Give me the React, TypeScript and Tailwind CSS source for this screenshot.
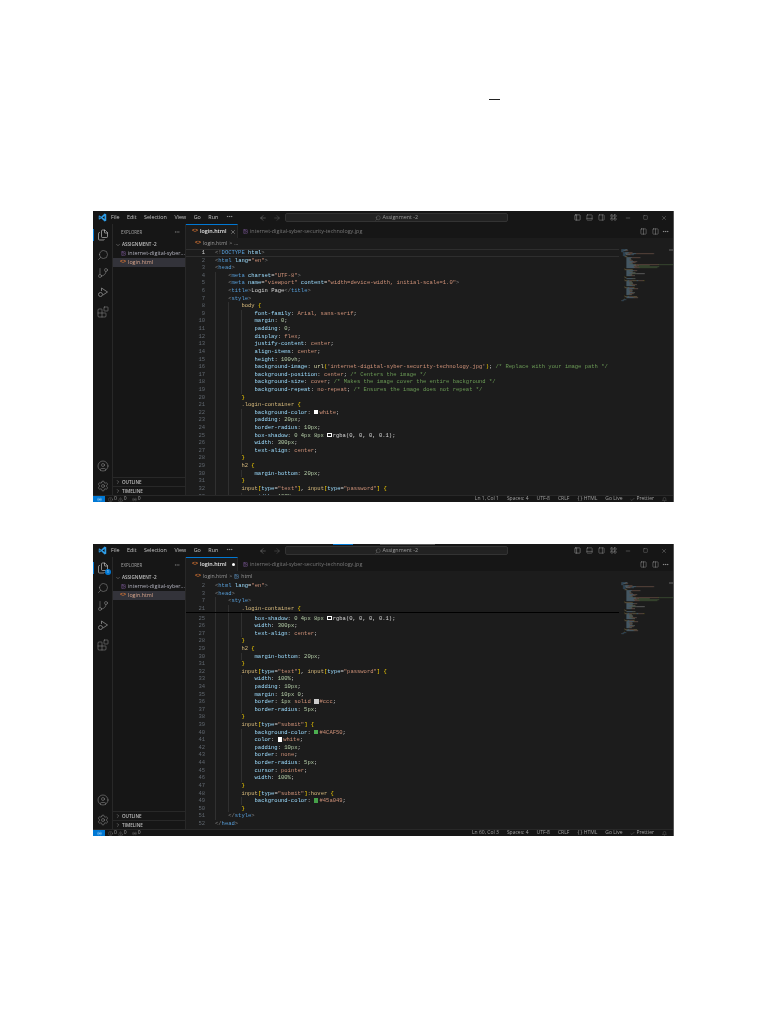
import {
  ArrowLeft,
  ArrowRight,
  Bell,
  Blocks,
  Check,
  ChevronDown,
  ChevronRight,
  CircleAlert,
  CircleUser,
  Columns2,
  Ellipsis,
  Files,
  GitBranch,
  Image,
  LayoutGrid,
  Minus,
  PanelBottom,
  PanelLeft,
  PanelRight,
  Radio,
  Search,
  Settings,
  Square,
  TriangleAlert,
  X,
} from "lucide-react";

type Kind = "punct" | "tag" | "attr" | "str" | "sel" | "prop" | "val" | "num" | "com" | "brace" | "text" | "fn";
type Tok = { k: Kind; t: string; swatch?: string };
type Line = { n: number; indent: number; toks: Tok[] };

const KIND: Record<Kind, { cls: string; hex: string }> = {
  punct: { cls: "text-[#808080]", hex: "#808080" },
  tag: { cls: "text-[#569cd6]", hex: "#569cd6" },
  attr: { cls: "text-[#9cdcfe]", hex: "#9cdcfe" },
  str: { cls: "text-[#ce9178]", hex: "#ce9178" },
  sel: { cls: "text-[#d7ba7d]", hex: "#d7ba7d" },
  prop: { cls: "text-[#9cdcfe]", hex: "#9cdcfe" },
  val: { cls: "text-[#ce9178]", hex: "#ce9178" },
  num: { cls: "text-[#b5cea8]", hex: "#b5cea8" },
  com: { cls: "text-[#6a9955]", hex: "#6a9955" },
  brace: { cls: "text-[#ffd700]", hex: "#ffd700" },
  text: { cls: "text-[#d4d4d4]", hex: "#d4d4d4" },
  fn: { cls: "text-[#dcdcaa]", hex: "#dcdcaa" },
};

function d(prop: string, val: string, comment?: string, swatch?: string): Tok[] {
  const toks: Tok[] = [
    { k: "prop", t: prop },
    { k: "text", t: ": " },
    { k: /^\d/.test(val) ? "num" : "val", t: val, swatch },
    { k: "text", t: ";" },
  ];
  if (comment) toks.push({ k: "com", t: " " + comment });
  return toks;
}

const open = (name: string): Tok[] => [
  { k: "punct", t: "<" },
  { k: "tag", t: name },
  { k: "punct", t: ">" },
];
const close = (name: string): Tok[] => [
  { k: "punct", t: "</" },
  { k: "tag", t: name },
  { k: "punct", t: ">" },
];
const sel = (t: string): Tok[] => [
  { k: "sel", t },
  { k: "text", t: " " },
  { k: "brace", t: "{" },
];
const end: Tok[] = [{ k: "brace", t: "}" }];
const inputSel = (type: string): Tok[] => [
  { k: "sel", t: "input" },
  { k: "brace", t: "[" },
  { k: "attr", t: "type" },
  { k: "text", t: "=" },
  { k: "str", t: `"${type}"` },
  { k: "brace", t: "]" },
];

const RAW: [number, Tok[]][] = [
  [0, [{ k: "punct", t: "<!" }, { k: "tag", t: "DOCTYPE" }, { k: "text", t: " " }, { k: "attr", t: "html" }, { k: "punct", t: ">" }]],
  [0, [{ k: "punct", t: "<" }, { k: "tag", t: "html" }, { k: "text", t: " " }, { k: "attr", t: "lang" }, { k: "text", t: "=" }, { k: "str", t: '"en"' }, { k: "punct", t: ">" }]],
  [0, open("head")],
  [1, [{ k: "punct", t: "<" }, { k: "tag", t: "meta" }, { k: "text", t: " " }, { k: "attr", t: "charset" }, { k: "text", t: "=" }, { k: "str", t: '"UTF-8"' }, { k: "punct", t: ">" }]],
  [1, [{ k: "punct", t: "<" }, { k: "tag", t: "meta" }, { k: "text", t: " " }, { k: "attr", t: "name" }, { k: "text", t: "=" }, { k: "str", t: '"viewport"' }, { k: "text", t: " " }, { k: "attr", t: "content" }, { k: "text", t: "=" }, { k: "str", t: '"width=device-width, initial-scale=1.0"' }, { k: "punct", t: ">" }]],
  [1, [...open("title"), { k: "text", t: "Login Page" }, ...close("title")]],
  [1, open("style")],
  [2, sel("body")],
  [3, d("font-family", "Arial, sans-serif")],
  [3, d("margin", "0")],
  [3, d("padding", "0")],
  [3, d("display", "flex")],
  [3, d("justify-content", "center")],
  [3, d("align-items", "center")],
  [3, d("height", "100vh")],
  [3, [{ k: "prop", t: "background-image" }, { k: "text", t: ": " }, { k: "fn", t: "url" }, { k: "brace", t: "(" }, { k: "str", t: "'internet-digital-syber-security-technology.jpg'" }, { k: "brace", t: ")" }, { k: "text", t: ";" }, { k: "com", t: " /* Replace with your image path */" }]],
  [3, d("background-position", "center", "/* Centers the image */")],
  [3, d("background-size", "cover", "/* Makes the image cover the entire background */")],
  [3, d("background-repeat", "no-repeat", "/* Ensures the image does not repeat */")],
  [2, end],
  [2, sel(".login-container")],
  [3, d("background-color", "white", undefined, "bg-white")],
  [3, d("padding", "20px")],
  [3, d("border-radius", "10px")],
  [3, [{ k: "prop", t: "box-shadow" }, { k: "text", t: ": " }, { k: "num", t: "0 4px 8px " }, { k: "text", t: "rgba(0, 0, 0, 0.1)", swatch: "border-[0.5px] border-white" }, { k: "text", t: ";" }]],
  [3, d("width", "300px")],
  [3, d("text-align", "center")],
  [2, end],
  [2, sel("h2")],
  [3, d("margin-bottom", "20px")],
  [2, end],
  [2, [...inputSel("text"), { k: "text", t: ", " }, ...inputSel("password"), { k: "text", t: " " }, { k: "brace", t: "{" }]],
  [3, d("width", "100%")],
  [3, d("padding", "10px")],
  [3, d("margin", "10px 0")],
  [3, [{ k: "prop", t: "border" }, { k: "text", t: ": " }, { k: "num", t: "1px " }, { k: "val", t: "solid " }, { k: "val", t: "#ccc", swatch: "bg-[#cccccc]" }, { k: "text", t: ";" }]],
  [3, d("border-radius", "5px")],
  [2, end],
  [2, [...inputSel("submit"), { k: "text", t: " " }, { k: "brace", t: "{" }]],
  [3, d("background-color", "#4CAF50", undefined, "bg-[#4caf50]")],
  [3, d("color", "white", undefined, "bg-white")],
  [3, d("padding", "10px")],
  [3, d("border", "none")],
  [3, d("border-radius", "5px")],
  [3, d("cursor", "pointer")],
  [3, d("width", "100%")],
  [2, end],
  [2, [...inputSel("submit"), { k: "sel", t: ":hover" }, { k: "text", t: " " }, { k: "brace", t: "{" }]],
  [3, d("background-color", "#45a049", undefined, "bg-[#45a049]")],
  [2, end],
  [1, close("style")],
  [0, close("head")],
];

const LINES: Line[] = RAW.map(([indent, toks], i) => ({ n: i + 1, indent, toks }));
const range = (a: number, b: number) => LINES.slice(a - 1, b);

function CodeRow({ line, active }: { line: Line; active?: boolean }) {
  return (
    <div className={`flex h-[7.62px] items-center whitespace-pre leading-[7.62px] ${active ? "border-y-[0.5px] border-[#2e2e2e]" : ""}`}>
      <span className={`w-[19px] shrink-0 text-right ${active ? "text-[#cccccc]" : "text-[#5f666e]"}`}>{line.n}</span>
      <span className="w-[10px] shrink-0" />
      {Array.from({ length: line.indent }).map((_, i) => (
        <span key={i} className="h-full w-[13.2px] shrink-0 border-l border-[#303030]" />
      ))}
      {line.toks.map((tok, i) => (
        <span key={i} className={KIND[tok.k].cls}>
          {tok.swatch && <span className={`mr-[1px] inline-block size-[4.5px] align-[-0.5px] ${tok.swatch}`} />}
          {tok.t}
        </span>
      ))}
    </div>
  );
}

function Minimap() {
  return (
    <svg width="54" height="70" viewBox="0 0 54 70" className="shrink-0">
      <rect x="50" y="0.5" width="4" height="1" fill="#666666" />
      {LINES.map((line) => {
        let x = 2 + line.indent * 1.8;
        return line.toks.map((tok, i) => {
          const w = tok.t.length * 0.45;
          const r = <rect key={`${line.n}-${i}`} x={x} y={line.n - 0.5} width={w} height={0.6} fill={KIND[tok.k].hex} opacity={0.55} />;
          x += w;
          return r;
        });
      })}
    </svg>
  );
}

function VsCodeLogo() {
  return (
    <svg width="9" height="9" viewBox="0 0 24 24" fill="#2f9ee8">
      <path d="M17.5 1.5 8.6 10 3.9 6.4 2 7.3v9.4l1.9.9 4.7-3.6 8.9 8.5 4.5-1.8V3.3zM4.2 14.7V9.3L7 12zm13.3 1.6L12 12l5.5-4.3z" />
    </svg>
  );
}

function ActivityIcon({ children, className }: { children: React.ReactNode; className?: string }) {
  return <div className={`flex w-full justify-center text-[#8d8d8d] ${className ?? ""}`}>{children}</div>;
}

function FileIcon() {
  return <span className="font-['Liberation_Mono',monospace] text-[5px] font-bold leading-none text-[#e37933]">&lt;&gt;</span>;
}

function TitleBar({ progress }: { progress?: boolean }) {
  return (
    <div className="relative flex h-[13px] shrink-0 items-center bg-[#161616] text-[5.4px] text-[#c0c0c0]">
      {progress && (
        <>
          <div className="absolute left-[240px] top-0 h-px w-[20px] bg-[#0078d4]" />
          <div className="absolute left-[287px] top-0 h-px w-[55px] bg-[#555555]" />
        </>
      )}
      <div className="flex w-[18px] justify-center">
        <VsCodeLogo />
      </div>
      <div className="flex gap-[7.5px]">
        <span>File</span>
        <span>Edit</span>
        <span>Selection</span>
        <span>View</span>
        <span>Go</span>
        <span>Run</span>
        <Ellipsis size={7} strokeWidth={1.5} />
      </div>
      <div className="ml-[26px] flex gap-[6px] text-[#a0a0a0]">
        <ArrowLeft size={8} strokeWidth={1.2} />
        <ArrowRight size={8} strokeWidth={1.2} className="text-[#707070]" />
      </div>
      <div className="ml-[4px] flex h-[9px] w-[223px] items-center justify-center gap-[2px] rounded-[2px] border-[0.5px] border-[#333333] bg-[#222222] text-[#9a9a9a]">
        <Search size={6} strokeWidth={1.2} className="-scale-x-100" />
        <span>Assignment -2</span>
      </div>
      <div className="ml-[66px] flex items-center gap-[5px] text-[#c5c5c5]">
        <PanelLeft size={7} strokeWidth={1.4} />
        <PanelBottom size={7} strokeWidth={1.2} />
        <PanelRight size={7} strokeWidth={1.2} />
        <LayoutGrid size={7} strokeWidth={1.2} />
      </div>
      <div className="ml-[8px] flex items-center gap-[12.5px] text-[#c5c5c5]">
        <Minus size={6} strokeWidth={1.2} />
        <Square size={5} strokeWidth={1.2} />
        <X size={6} strokeWidth={1.2} />
      </div>
    </div>
  );
}

function ActivityBar({ badge }: { badge?: boolean }) {
  return (
    <div className="flex w-[20px] shrink-0 flex-col items-center border-r-[0.5px] border-[#282828] bg-[#161616] pt-[5px]">
      <ActivityIcon className="relative border-l border-[#0078d4] text-[#d7d7d7]">
        <Files size={12} strokeWidth={1.2} />
        {badge && (
          <span className="absolute left-[11px] top-[7px] flex size-[6px] items-center justify-center rounded-full bg-[#0078d4] text-[4px] text-white">
            1
          </span>
        )}
      </ActivityIcon>
      <ActivityIcon className="mt-[8px]">
        <Search size={12} strokeWidth={1.1} className="-scale-x-100" />
      </ActivityIcon>
      <ActivityIcon className="mt-[6px]">
        <GitBranch size={12} strokeWidth={1.1} />
      </ActivityIcon>
      <ActivityIcon className="mt-[7px]">
        <svg width="12" height="12" viewBox="0 0 24 24" fill="none" stroke="currentColor" strokeWidth="1.6">
          <path d="M9 4v6M9 4l12 8-9 6" />
          <circle cx="7" cy="17" r="4" />
        </svg>
      </ActivityIcon>
      <ActivityIcon className="mt-[8px]">
        <Blocks size={12} strokeWidth={1.1} />
      </ActivityIcon>
      <ActivityIcon className="mt-auto">
        <CircleUser size={12} strokeWidth={1.1} />
      </ActivityIcon>
      <ActivityIcon className="mb-[3px] mt-[8px]">
        <Settings size={12} strokeWidth={1.1} />
      </ActivityIcon>
    </div>
  );
}

function Sidebar() {
  return (
    <div className="flex w-[73px] shrink-0 flex-col border-r-[0.5px] border-[#282828] bg-[#161616] text-[5.4px] text-[#c0c0c0]">
      <div className="flex h-[16px] shrink-0 items-center justify-between pl-[8px] pr-[5px] text-[4.4px] text-[#a0a0a0]">
        <span>EXPLORER</span>
        <Ellipsis size={6} strokeWidth={1.5} />
      </div>
      <div className="flex h-[9px] items-center gap-[1px] pl-[2px] text-[4.6px] font-semibold">
        <ChevronDown size={6} strokeWidth={1.4} />
        <span>ASSIGNMENT -2</span>
      </div>
      <div className="flex h-[9px] items-center gap-[2px] pl-[8px] text-[#b0b0bc]">
        <Image size={5} strokeWidth={1.6} className="text-[#a074c4]" />
        <span className="truncate">internet-digital-syber...</span>
      </div>
      <div className="flex h-[9px] items-center gap-[2px] bg-[#33333a] pl-[7px] text-[#d8a58c]">
        <FileIcon />
        <span>login.html</span>
      </div>
      <div className="mt-auto flex h-[9px] items-center gap-[1px] border-t-[0.5px] border-[#282828] pl-[2px] text-[4.6px] font-semibold">
        <ChevronRight size={6} strokeWidth={1.4} />
        <span>OUTLINE</span>
      </div>
      <div className="flex h-[9px] items-center gap-[1px] border-t-[0.5px] border-[#282828] pl-[2px] text-[4.6px] font-semibold">
        <ChevronRight size={6} strokeWidth={1.4} />
        <span>TIMELINE</span>
      </div>
    </div>
  );
}

function Tabs({ dirty }: { dirty?: boolean }) {
  return (
    <div className="flex h-[14px] shrink-0 items-stretch bg-[#161616] text-[5.4px]">
      <div className="flex w-[52px] items-center gap-[2px] border-r-[0.5px] border-t-[0.5px] border-[#282828] border-t-[#0078d4] bg-[#1c1c1c] pl-[6px] text-[#e4e4e4]">
        <FileIcon />
        <span className="font-semibold">login.html</span>
        {dirty ? (
          <span className="ml-[4px] size-[3px] rounded-full bg-white" />
        ) : (
          <X size={6} strokeWidth={1.5} className="ml-[2px]" />
        )}
      </div>
      <div className="flex items-center gap-[2px] pl-[5px] text-[#777777]">
        <Image size={5} strokeWidth={1.6} className="text-[#a074c4]" />
        <span>internet-digital-syber-security-technology.jpg</span>
      </div>
      <div className="ml-auto flex items-center pr-[4.5px] text-[#c5c5c5]">
        <Columns2 size={7} strokeWidth={1.2} />
        <Columns2 size={7} strokeWidth={1.2} className="ml-[5px]" />
        <Ellipsis size={7} strokeWidth={1.5} className="ml-[3px]" />
      </div>
    </div>
  );
}

function Breadcrumb({ tail }: { tail: React.ReactNode }) {
  return (
    <div className="flex h-[11px] shrink-0 items-center gap-[2px] bg-[#1c1c1c] pl-[9px] text-[5.2px] text-[#9a9a9a]">
      <FileIcon />
      <span>login.html</span>
      <span>&gt;</span>
      {tail}
    </div>
  );
}

function StatusBar({ pos }: { pos: string }) {
  return (
    <div className="flex h-[7px] shrink-0 items-center border-t-[0.5px] border-[#282828] bg-[#161616] text-[5px] text-[#a0a0a0]">
      <div className="flex h-full w-[12px] items-center justify-center bg-[#0078d4] text-white">
        <Radio size={5} strokeWidth={1.4} />
      </div>
      <div className="ml-[3px] flex items-center gap-[1px]">
        <CircleAlert size={5} strokeWidth={1.2} />
        <span>0</span>
        <TriangleAlert size={5} strokeWidth={1.2} />
        <span>0</span>
        <Radio size={5} strokeWidth={1.2} className="ml-[4px]" />
        <span>0</span>
      </div>
      <div className="ml-auto flex items-center gap-[8px] pr-[6px]">
        <span>{pos}</span>
        <span>Spaces: 4</span>
        <span>UTF-8</span>
        <span>CRLF</span>
        <span>{"{ }"} HTML</span>
        <span>Go Live</span>
        <span className="flex items-center gap-[1px]">
          <Check size={5} strokeWidth={1.4} />
          Prettier
        </span>
        <Bell size={5} strokeWidth={1.2} />
      </div>
    </div>
  );
}

function EditorWindow({ height, dirty, pos, tail, children }: {
  height: string;
  dirty?: boolean;
  pos: string;
  tail: React.ReactNode;
  children: React.ReactNode;
}) {
  return (
    <div className={`ml-[93px] flex w-[581px] flex-col overflow-hidden border-r border-[#555555] font-['Open_Sans',sans-serif] blur-[0.35px] ${height}`}>
      <TitleBar progress={dirty} />
      <div className="flex min-h-0 flex-1">
        <ActivityBar badge={dirty} />
        <Sidebar />
        <div className="flex min-w-0 flex-1 flex-col bg-[#1c1c1c]">
          <Tabs dirty={dirty} />
          <Breadcrumb tail={tail} />
          <div className="flex min-h-0 flex-1">
            <div className="flex min-w-0 flex-1 flex-col overflow-hidden font-['Liberation_Mono',monospace] text-[5.5px]">{children}</div>
            <Minimap />
          </div>
        </div>
      </div>
      <StatusBar pos={pos} />
    </div>
  );
}

export default function App() {
  const sticky = [LINES[1], LINES[2], LINES[6], LINES[20]];
  return (
    <div className="min-h-[1024px] bg-white pt-[99px]">
      <div className="ml-[489px] h-px w-[11px] bg-[#222222]" />
      <div className="h-[111px]" />
      <EditorWindow height="h-[291px]" pos="Ln 1, Col 1" tail={<span>...</span>}>
        {range(1, 33).map((line) => (
          <CodeRow key={line.n} line={line} active={line.n === 1} />
        ))}
      </EditorWindow>
      <div className="h-[42px]" />
      <EditorWindow
        height="h-[292px]"
        dirty
        pos="Ln 60, Col 3"
        tail={
          <>
            <Image size={5} strokeWidth={1.6} className="text-[#75beff]" />
            <span>html</span>
          </>
        }
      >
        <div className="h-[31px] shrink-0 border-b border-black">
          {sticky.map((line) => (
            <CodeRow key={line.n} line={line} />
          ))}
        </div>
        <div className="min-h-0 flex-1 overflow-hidden">
          <div className="-mt-[6.1px]">
            {range(24, 52).map((line) => (
              <CodeRow key={line.n} line={line} />
            ))}
          </div>
        </div>
      </EditorWindow>
    </div>
  );
}
